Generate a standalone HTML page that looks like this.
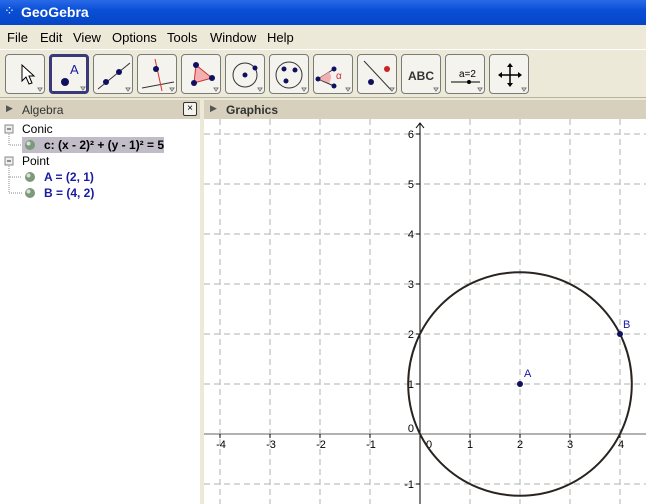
<!DOCTYPE html>
<html><head><style>
body{margin:0;width:646px;height:504px;overflow:hidden;font-family:"Liberation Sans",sans-serif;background:#ece9d8;position:relative}
.t{position:absolute;left:0;top:0;width:646px;height:25px;background:linear-gradient(#2a6ae8,#0a4fd6 40%,#0646c8);color:#fff;font-weight:bold;font-size:14px}
.m{position:absolute;top:25px;left:0;width:646px;height:24px;font-size:13px}
.m span{position:absolute;top:5px}
.b{position:absolute;top:54px;width:40px;height:40px;border:1px solid #7a7a7a;border-radius:4px;background:#f4f3ee;box-sizing:border-box}
.b svg{position:absolute;left:0;top:0}
.h{position:absolute;top:100px;height:19px;background:#d6d0bc;font-size:12px}
</style></head><body>
<div class="t"><span style="position:absolute;left:4px;top:3px;font-size:13px;font-weight:normal">⁘</span><span style="position:absolute;left:21px;top:4px">GeoGebra</span></div>
<div class="m"><span style="left:7px">File</span><span style="left:40px">Edit</span><span style="left:73px">View</span><span style="left:112px">Options</span><span style="left:167px">Tools</span><span style="left:210px">Window</span><span style="left:267px">Help</span></div>
<div style="position:absolute;top:49px;left:0;width:646px;height:1px;background:#fff"></div>
<div class="b" style="left:5px"><svg width="40" height="40"><path d="M16 10 L16 26 L20 22 L23 29 L26 28 L23 21 L28 21 Z" fill="#fff" stroke="#000"/><path d="M32 33l4 0-2 3z" fill="#fff" stroke="#777"/></svg></div>
<div class="b" style="left:49px;border:3px solid #3a3a7a"><svg width="36" height="36"><circle cx="13" cy="25" r="4" fill="#101060"/><text x="18" y="17" font-size="13" fill="#1a1aa0" font-family="Liberation Sans">A</text><path d="M29 30l4 0-2 3z" fill="#fff" stroke="#777"/></svg></div>
<div class="b" style="left:93px"><svg width="40" height="40"><line x1="4" y1="34" x2="36" y2="8" stroke="#333"/><circle cx="12" cy="27" r="3" fill="#101060"/><circle cx="25" cy="17" r="3" fill="#101060"/><path d="M32 33l4 0-2 3z" fill="#fff" stroke="#777"/></svg></div>
<div class="b" style="left:137px"><svg width="40" height="40"><line x1="4" y1="33" x2="36" y2="27" stroke="#333"/><line x1="17" y1="4" x2="24" y2="36" stroke="#d33"/><circle cx="18" cy="14" r="3" fill="#101060"/><path d="M32 33l4 0-2 3z" fill="#fff" stroke="#777"/></svg></div>
<div class="b" style="left:181px"><svg width="40" height="40"><path d="M14 10L30 23 12 28Z" fill="#f4b0b0" stroke="#c33"/><circle cx="14" cy="10" r="3" fill="#101060"/><circle cx="30" cy="23" r="3" fill="#101060"/><circle cx="12" cy="28" r="3" fill="#101060"/><path d="M32 33l4 0-2 3z" fill="#fff" stroke="#777"/></svg></div>
<div class="b" style="left:225px"><svg width="40" height="40"><circle cx="19" cy="20" r="12" fill="none" stroke="#333"/><circle cx="19" cy="20" r="2.5" fill="#101060"/><circle cx="29" cy="13" r="2.5" fill="#101060"/><path d="M32 33l4 0-2 3z" fill="#fff" stroke="#777"/></svg></div>
<div class="b" style="left:269px"><svg width="40" height="40"><circle cx="19" cy="20" r="13" fill="none" stroke="#333"/><circle cx="14" cy="14" r="2.5" fill="#101060"/><circle cx="25" cy="15" r="2.5" fill="#101060"/><circle cx="16" cy="26" r="2.5" fill="#101060"/><path d="M32 33l4 0-2 3z" fill="#fff" stroke="#777"/></svg></div>
<div class="b" style="left:313px"><svg width="40" height="40"><path d="M4 24L20 14M4 24L20 31" stroke="#333"/><path d="M4 24L15 17Q19 22 15 28Z" fill="#f4b0b0"/><circle cx="4" cy="24" r="2.5" fill="#101060"/><circle cx="20" cy="14" r="2.5" fill="#101060"/><circle cx="20" cy="31" r="2.5" fill="#101060"/><text x="22" y="24" font-size="10" fill="#c33">α</text><path d="M32 33l4 0-2 3z" fill="#fff" stroke="#777"/></svg></div>
<div class="b" style="left:357px"><svg width="40" height="40"><line x1="6" y1="6" x2="34" y2="36" stroke="#333"/><circle cx="29" cy="14" r="3" fill="#c22"/><circle cx="13" cy="27" r="3" fill="#101060"/><path d="M32 33l4 0-2 3z" fill="#fff" stroke="#777"/></svg></div>
<div class="b" style="left:401px"><svg width="40" height="40"><text x="6" y="25" font-size="12" font-weight="bold" fill="#333" font-family="Liberation Sans">ABC</text><path d="M32 33l4 0-2 3z" fill="#fff" stroke="#777"/></svg></div>
<div class="b" style="left:445px"><svg width="40" height="40"><text x="13" y="22" font-size="10" fill="#000" font-family="Liberation Sans">a=2</text><line x1="5" y1="27" x2="34" y2="27" stroke="#000"/><circle cx="23" cy="27" r="2" fill="#000"/><path d="M32 33l4 0-2 3z" fill="#fff" stroke="#777"/></svg></div>
<div class="b" style="left:489px"><svg width="40" height="40"><path d="M20 10V30M10 20H30" stroke="#000" stroke-width="1.5"/><path d="M20 8l-3 4h6zM20 32l-3-4h6zM8 20l4-3v6zM32 20l-4-3v6z" fill="#000"/><path d="M32 33l4 0-2 3z" fill="#fff" stroke="#777"/></svg></div>
<div style="position:absolute;left:0;top:97px;width:646px;height:1px;background:#b8b2a0"></div>
<div class="h" style="left:0;width:200px"><span style="position:absolute;left:6px;top:3px;font-size:9px;color:#555">▶</span><span style="position:absolute;left:22px;top:3px;color:#333">Algebra</span><span style="position:absolute;left:183px;top:2px;width:12px;height:12px;border:1px solid #333;border-radius:2px;background:#f4f3ee;font-size:10px;line-height:12px;text-align:center">×</span></div>
<div class="h" style="left:204px;width:442px"><span style="position:absolute;left:6px;top:3px;font-size:9px;color:#555">▶</span><span style="position:absolute;left:22px;top:3px;font-weight:bold;color:#333">Graphics</span></div>
<div style="position:absolute;left:0;top:119px;width:200px;height:385px;background:#fff;font-size:12px">
<svg width="200" height="100" style="position:absolute;left:0;top:0">
<rect x="5" y="6" width="8" height="8" fill="#eee" stroke="#888"/><line x1="7" y1="10" x2="11" y2="10" stroke="#333"/>
<rect x="5" y="38" width="8" height="8" fill="#eee" stroke="#888"/><line x1="7" y1="42" x2="11" y2="42" stroke="#333"/>
<path d="M9 15V26H22M9 47V58H22M9 58V74H22" stroke="#888" stroke-dasharray="1,1" fill="none"/>
<rect x="22" y="18" width="142" height="16" fill="#c0bcc8"/>
<circle cx="30" cy="26" r="5" fill="#7a9a7a"/><circle cx="30" cy="58" r="5" fill="#7a9a7a"/><circle cx="30" cy="74" r="5" fill="#7a9a7a"/>
<circle cx="28.5" cy="24.5" r="2" fill="#ddd"/><circle cx="28.5" cy="56.5" r="2" fill="#ddd"/><circle cx="28.5" cy="72.5" r="2" fill="#ddd"/>
</svg>
<span style="position:absolute;left:22px;top:3px">Conic</span>
<span style="position:absolute;left:44px;top:19px;font-weight:bold">c: (x - 2)² + (y - 1)² = 5</span>
<span style="position:absolute;left:22px;top:35px">Point</span>
<span style="position:absolute;left:44px;top:51px;font-weight:bold;color:#1a1aa0">A = (2, 1)</span>
<span style="position:absolute;left:44px;top:67px;font-weight:bold;color:#1a1aa0">B = (4, 2)</span>
</div>
<div style="position:absolute;left:200px;top:119px;width:4px;height:385px;background:#ece9d8"></div>
<svg style="position:absolute;left:204px;top:119px" width="442" height="385" font-family="Liberation Sans" font-size="11">
<rect width="442" height="385" fill="#fff"/>
<g stroke="#b0b0b0" stroke-dasharray="6,4" transform="translate(-204,-119)">
<line x1="220" y1="119" x2="220" y2="504"/><line x1="270" y1="119" x2="270" y2="504"/><line x1="320" y1="119" x2="320" y2="504"/><line x1="370" y1="119" x2="370" y2="504"/><line x1="470" y1="119" x2="470" y2="504"/><line x1="520" y1="119" x2="520" y2="504"/><line x1="570" y1="119" x2="570" y2="504"/><line x1="620" y1="119" x2="620" y2="504"/>
<line x1="204" y1="134" x2="646" y2="134"/><line x1="204" y1="184" x2="646" y2="184"/><line x1="204" y1="234" x2="646" y2="234"/><line x1="204" y1="284" x2="646" y2="284"/><line x1="204" y1="334" x2="646" y2="334"/><line x1="204" y1="384" x2="646" y2="384"/><line x1="204" y1="484" x2="646" y2="484"/>
</g>
<g transform="translate(-204,-119)">
<line x1="204" y1="434" x2="646" y2="434" stroke="#999" stroke-width="1.5"/>
<line x1="420" y1="123" x2="420" y2="504" stroke="#000"/>
<path d="M416 128L420 123 424 128" fill="none" stroke="#000"/>
<g stroke="#000"><line x1="220" y1="434" x2="220" y2="438"/><line x1="270" y1="434" x2="270" y2="438"/><line x1="320" y1="434" x2="320" y2="438"/><line x1="370" y1="434" x2="370" y2="438"/><line x1="470" y1="434" x2="470" y2="438"/><line x1="520" y1="434" x2="520" y2="438"/><line x1="570" y1="434" x2="570" y2="438"/><line x1="620" y1="434" x2="620" y2="438"/>
<line x1="416" y1="134" x2="420" y2="134"/><line x1="416" y1="184" x2="420" y2="184"/><line x1="416" y1="234" x2="420" y2="234"/><line x1="416" y1="284" x2="420" y2="284"/><line x1="416" y1="334" x2="420" y2="334"/><line x1="416" y1="384" x2="420" y2="384"/><line x1="416" y1="484" x2="420" y2="484"/></g>
<g fill="#000" text-anchor="middle"><text x="221" y="448">-4</text><text x="271" y="448">-3</text><text x="321" y="448">-2</text><text x="371" y="448">-1</text><text x="429" y="448">0</text><text x="470" y="448">1</text><text x="520" y="448">2</text><text x="570" y="448">3</text><text x="621" y="448">4</text></g>
<g fill="#000" text-anchor="end"><text x="414" y="138">6</text><text x="414" y="188">5</text><text x="414" y="238">4</text><text x="414" y="288">3</text><text x="414" y="338">2</text><text x="414" y="388">1</text><text x="414" y="432">0</text><text x="414" y="488">-1</text></g>
<circle cx="520" cy="384" r="111.8" fill="none" stroke="#2a2420" stroke-width="2"/>
<circle cx="520" cy="384" r="3" fill="#101060"/><circle cx="620" cy="334" r="3" fill="#101060"/>
<text x="524" y="377" fill="#1a1aa0">A</text><text x="623" y="328" fill="#1a1aa0">B</text>
</g>
</svg>
</body></html>
